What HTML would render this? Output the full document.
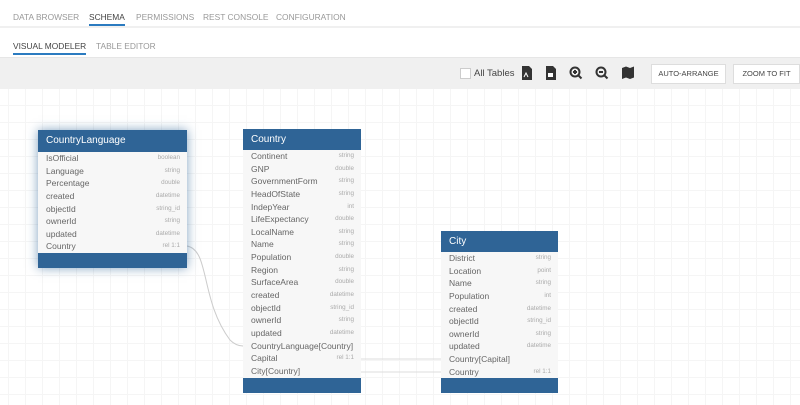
<!DOCTYPE html><html><head><style>
*{margin:0;padding:0;box-sizing:border-box}
body{width:800px;height:405px;overflow:hidden;background:#fff;font-family:"Liberation Sans",sans-serif;position:relative}
.nav{position:absolute;top:0;left:0;width:800px;height:28px;border-bottom:2px solid #f0f0f0}
.nav span,.sub span{position:absolute;font-size:8.4px;color:#999;top:12px;white-space:nowrap}
.nav .on,.sub .on{color:#444;border-bottom:2px solid #2b7bc0;padding-bottom:2px}
.sub{position:absolute;top:28px;left:0;width:800px;height:30px;border-bottom:1px solid #e6e6e6}
.sub span{top:13px}
.tb{position:absolute;top:58px;left:0;width:800px;height:31px;background:#f0f0f0}
.canvas{position:absolute;top:89px;left:0;width:800px;height:316px;background-color:#fff;background-image:linear-gradient(#f5f5f5 1px,transparent 1px),linear-gradient(90deg,#f5f5f5 1px,transparent 1px);background-size:17px 17px;background-position:-9px -1px}
.btn{position:absolute;top:64px;height:20px;background:#fff;border:1px solid #ddd;font-size:7.5px;color:#444;line-height:18px;text-align:center}
.t{position:absolute;background:#f7f7f7}
.t .h{background:#2f6496;color:#fff;font-size:10px;height:21px;line-height:21px;padding-left:8px}
.t .r{height:12.65px;line-height:12.65px;font-size:8.5px;color:#666;padding:0 7px 0 8px;position:relative;white-space:nowrap}
.t .r i{position:absolute;right:7px;font-style:normal;font-size:6.3px;color:#aaa}
.t .f{background:#2f6496;height:15px}
</style></head><body>
<div class="nav">
<span style="left:13px">DATA BROWSER</span>
<span class="on" style="left:89px">SCHEMA</span>
<span style="left:136px">PERMISSIONS</span>
<span style="left:203px">REST CONSOLE</span>
<span style="left:276px">CONFIGURATION</span>
</div>
<div class="sub">
<span class="on" style="left:13px">VISUAL MODELER</span>
<span style="left:96px">TABLE EDITOR</span>
</div>
<div class="tb"></div>
<div style="position:absolute;left:460px;top:68px;width:11px;height:11px;border:1px solid #ccc;background:#fff"></div>
<div style="position:absolute;left:474px;top:68px;font-size:9.5px;color:#444">All Tables</div>
<svg style="position:absolute;left:521px;top:65px" width="120" height="16">
<path d="M1 1h7l3 3v11H1z" fill="#333"/><path d="M3 12l2-4 2 4" stroke="#fff" fill="none" stroke-width="1"/>
<path d="M25 1h7l3 3v11H25z" fill="#333"/><rect x="27" y="8" width="5" height="4" fill="#fff"/>
<circle cx="54" cy="7" r="4.5" stroke="#333" stroke-width="2" fill="none"/><path d="M57 10l3.5 3.5M52 7h4M54 5v4" stroke="#333" stroke-width="2"/>
<circle cx="80" cy="7" r="4.5" stroke="#333" stroke-width="2" fill="none"/><path d="M83 10l3.5 3.5M78 7h4" stroke="#333" stroke-width="2"/>
<path d="M101 3l4-1.5 4 1.5 4-1.5v11l-4 1.5-4-1.5-4 1.5z" fill="#333"/>
</svg>
<div class="btn" style="left:651px;width:75px">AUTO-ARRANGE</div>
<div class="btn" style="left:733px;width:67px">ZOOM TO FIT</div>
<div class="canvas"></div>
<svg style="position:absolute;left:0;top:0" width="800" height="405">
<path d="M187 246C210 250 200 300 230 340Q236 346 243 346" stroke="#ccc" fill="none"/>
<path d="M361 359H441M361 372H441" stroke="#ddd"/>
</svg>
<div class="t" style="left:38px;top:130px;width:149px;box-shadow:0 0 10px rgba(47,100,150,.6)">
<div class="h" style="height:22px;line-height:22px">CountryLanguage</div>
<div class="r">IsOfficial<i>boolean</i></div><div class="r">Language<i>string</i></div><div class="r">Percentage<i>double</i></div><div class="r">created<i>datetime</i></div><div class="r">objectId<i>string_id</i></div><div class="r">ownerId<i>string</i></div><div class="r">updated<i>datetime</i></div><div class="r">Country<i>rel 1:1</i></div>
<div class="f"></div></div>
<div class="t" style="left:243px;top:129px;width:118px">
<div class="h">Country</div>
<div class="r">Continent<i>string</i></div><div class="r">GNP<i>double</i></div><div class="r">GovernmentForm<i>string</i></div><div class="r">HeadOfState<i>string</i></div><div class="r">IndepYear<i>int</i></div><div class="r">LifeExpectancy<i>double</i></div><div class="r">LocalName<i>string</i></div><div class="r">Name<i>string</i></div><div class="r">Population<i>double</i></div><div class="r">Region<i>string</i></div><div class="r">SurfaceArea<i>double</i></div><div class="r">created<i>datetime</i></div><div class="r">objectId<i>string_id</i></div><div class="r">ownerId<i>string</i></div><div class="r">updated<i>datetime</i></div><div class="r" style="padding-right:0">CountryLanguage[Country]</div><div class="r">Capital<i>rel 1:1</i></div><div class="r">City[Country]</div>
<div class="f"></div></div>
<div class="t" style="left:441px;top:231px;width:117px">
<div class="h">City</div>
<div class="r">District<i>string</i></div><div class="r">Location<i>point</i></div><div class="r">Name<i>string</i></div><div class="r">Population<i>int</i></div><div class="r">created<i>datetime</i></div><div class="r">objectId<i>string_id</i></div><div class="r">ownerId<i>string</i></div><div class="r">updated<i>datetime</i></div><div class="r">Country[Capital]</div><div class="r">Country<i>rel 1:1</i></div>
<div class="f"></div></div>
</body></html>
